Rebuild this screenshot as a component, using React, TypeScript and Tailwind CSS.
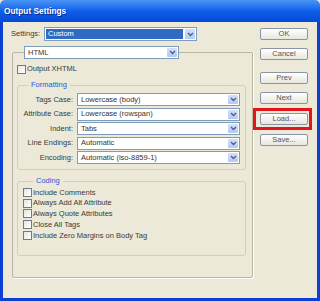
import React from 'react';

const Chevron: React.FC = () => (
  <svg width="7" height="5" viewBox="0 0 7 5">
    <polyline points="1,1 3.5,3.5 6,1" fill="none" stroke="#4d6185" strokeWidth="1.4" />
  </svg>
);

const Select: React.FC<{ value: string; selected?: boolean; className?: string }> = ({ value, selected, className }) => (
  <div className={`flex items-stretch border border-[#7f9db9] bg-white ${className || ''}`}>
    <div className="flex flex-1 items-stretch p-px">
      <span
        className={`flex flex-1 items-center pl-[2px] ${selected ? 'bg-[#316ac5] text-white' : 'text-[#333]'}`}
      >
        {value}
      </span>
    </div>
    <div className="m-px flex w-[10px] items-center justify-center rounded-[1px] bg-gradient-to-b from-[#d4e0fc] to-[#b3c8f6]">
      <Chevron />
    </div>
  </div>
);

const Checkbox: React.FC<{ label: string }> = ({ label }) => (
  <div className="flex h-[10.8px] items-center gap-[1px]">
    <span className="h-[9px] w-[9px] shrink-0 border border-[#6f7b8a] bg-gradient-to-br from-[#e6e6e0] to-white" />
    <span className="text-[#3a3a3a]">{label}</span>
  </div>
);

const Button: React.FC<{ label: string; className?: string }> = ({ label, className }) => (
  <div
    className={`flex h-[12px] w-[48px] items-center justify-center rounded-[2px] border border-[#8b93a4] bg-gradient-to-b from-white to-[#e7e6df] text-[#555] ${className || ''}`}
  >
    {label}
  </div>
);

const formatting: [string, string][] = [
  ['Tags Case:', 'Lowercase (body)'],
  ['Attribute Case:', 'Lowercase (rowspan)'],
  ['Indent:', 'Tabs'],
  ['Line Endings:', 'Automatic'],
  ['Encoding:', 'Automatic (iso-8859-1)'],
];

const coding = [
  'Include Comments',
  'Always Add Alt Attribute',
  'Always Quote Attributes',
  'Close All Tags',
  'Include Zero Margins on Body Tag',
];

const App: React.FC = () => {
  return (
    <div className="h-[301px] w-[320px] overflow-hidden bg-[#ece9d8] font-['Liberation_Sans',Arial,sans-serif] text-[7.5px] leading-none">
      {/* Title bar */}
      <div className="flex h-[22px] items-center rounded-t-[5px] bg-gradient-to-b from-[#4b95f7] via-[#0d5ee9] to-[#0549d6] pl-[4px]">
        <span className="text-[8.3px] font-bold text-white [text-shadow:1px_1px_0_#0a2a8a]">Output Settings</span>
      </div>

      {/* Body */}
      <div className="flex h-[279px] border-x-[3px] border-b-[3px] border-[#0b40d2]">
        {/* Left column */}
        <div className="flex w-[250px] flex-col">
          <div className="mt-[5px] flex h-[14px] items-center pl-[8px]">
            <span className="w-[33px] text-[#3a3a3a]">Settings:</span>
            <Select value="Custom" selected className="h-[14px] w-[153px]" />
          </div>

          <fieldset className="mt-[5px] ml-[9px] flex h-[232px] flex-col rounded-[2px] border border-[#b9b6a6] pl-[4px] pr-[6px] shadow-[1px_1px_0_#fff]">
            <legend className="ml-[7px] p-0">
              <Select value="HTML" className="h-[13px] w-[155px]" />
            </legend>

            <div className="mt-[5px] flex h-[10px] items-center gap-[1px]">
              <span className="h-[9px] w-[9px] shrink-0 border border-[#6f7b8a] bg-gradient-to-br from-[#e6e6e0] to-white" />
              <span className="text-[#3a3a3a]">Output XHTML</span>
            </div>

            {/* Formatting */}
            <fieldset className="mt-[6px] rounded-[3px] border border-[#d0d0bf] pb-[5px] pr-[5px]">
              <legend className="ml-[10px] px-[3px] leading-[10px] text-[#2f52d8]">Formatting</legend>
              <div className="flex flex-col gap-[1.5px] pt-[3px]">
                {formatting.map(([label, value]) => (
                  <div key={label} className="flex h-[13px] items-center">
                    <span className="w-[56px] pr-[1px] text-right text-[#3a3a3a]">{label}</span>
                    <Select value={value} className="ml-[3px] h-[13px] flex-1" />
                  </div>
                ))}
              </div>
            </fieldset>

            {/* Coding */}
            <fieldset className="mt-[6px] h-[80px] rounded-[3px] border border-[#d0d0bf] pl-[5px]">
              <legend className="ml-[10px] px-[3px] leading-[10px] text-[#2f52d8]">Coding</legend>
              <div className="flex flex-col pt-[1px]">
                {coding.map((c) => (
                  <Checkbox key={c} label={c} />
                ))}
              </div>
            </fieldset>
          </fieldset>
        </div>

        {/* Right column */}
        <div className="flex flex-col pt-[6px]">
          <Button label="OK" className="ml-[7px]" />
          <Button label="Cancel" className="ml-[7px] mt-[8px]" />
          <Button label="Prev" className="ml-[7px] mt-[12px]" />
          <Button label="Next" className="ml-[7px] mt-[8px]" />
          <div className="mt-[4px] h-[22px] w-[59px] border-[3px] border-[#e3151a] pl-[4px] pt-[2px]">
            <Button label="Load..." />
          </div>
          <Button label="Save..." className="ml-[7px] mt-[4px]" />
        </div>
      </div>
    </div>
  );
};

export default App;
